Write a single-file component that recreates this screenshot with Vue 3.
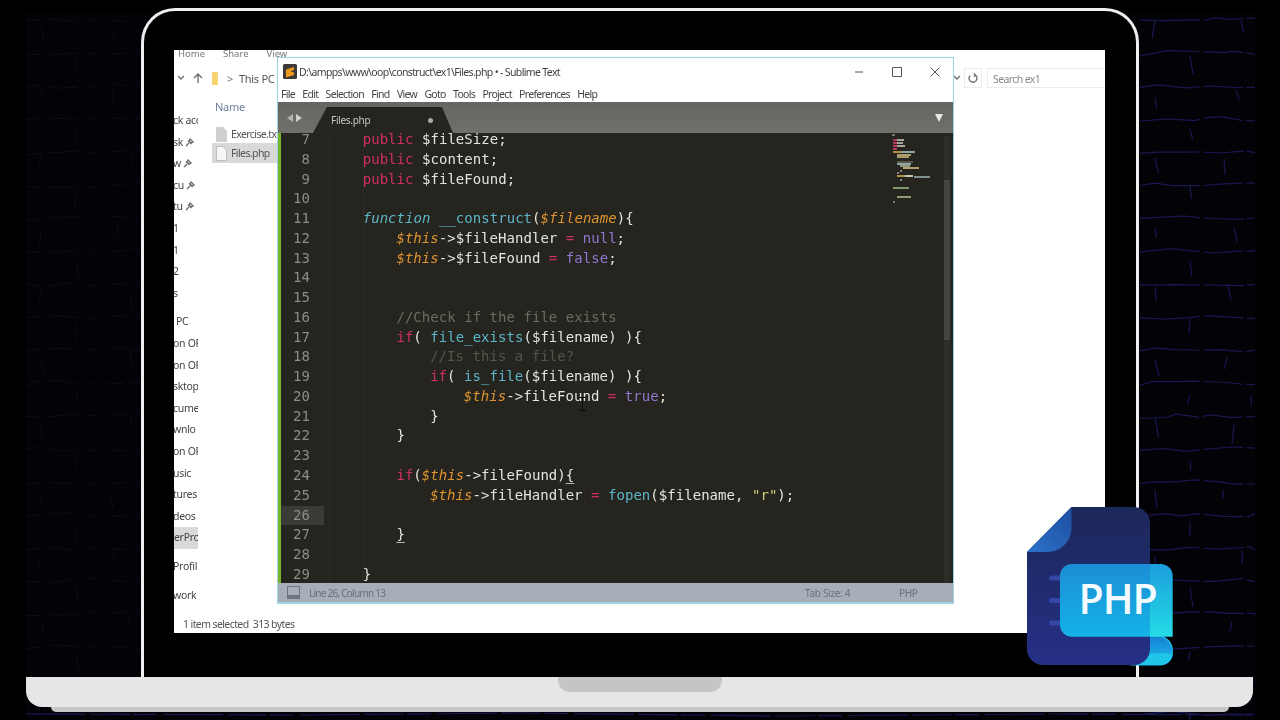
<script setup>
// tokens: k keyword, t plain, f function, v variable, o operator, c constant, m comment, s string, u underlined
const T = (t) => ["t", t];
const thisVar = ["v", "$this"];
const lines = [
  { n: 7, i: 1, p: [["k", "public"], T(" $fileSize;")] },
  { n: 8, i: 1, p: [["k", "public"], T(" $content;")] },
  { n: 9, i: 1, p: [["k", "public"], T(" $fileFound;")] },
  { n: 10, i: 0, p: [] },
  { n: 11, i: 1, p: [["f it", "function"], T(" "), ["f", "__construct"], T("("), ["v", "$filename"], T("){")] },
  { n: 12, i: 2, p: [thisVar, T("->$fileHandler "), ["o", "="], T(" "), ["c", "null"], T(";")] },
  { n: 13, i: 2, p: [thisVar, T("->$fileFound "), ["o", "="], T(" "), ["c", "false"], T(";")] },
  { n: 14, i: 0, p: [] },
  { n: 15, i: 0, p: [] },
  { n: 16, i: 2, p: [["m", "//Check if the file exists"]] },
  { n: 17, i: 2, p: [["k", "if"], T("( "), ["f", "file_exists"], T("($filename) ){")] },
  { n: 18, i: 3, p: [["m dim", "//Is this a file?"]] },
  { n: 19, i: 3, p: [["k", "if"], T("( "), ["f", "is_file"], T("($filename) ){")] },
  { n: 20, i: 4, p: [thisVar, T("->fileFound "), ["o", "="], T(" "), ["c", "true"], T(";")] },
  { n: 21, i: 3, p: [T("}")] },
  { n: 22, i: 2, p: [T("}")] },
  { n: 23, i: 0, p: [] },
  { n: 24, i: 2, p: [["k", "if"], T("("), thisVar, T("->fileFound)"), ["t u", "{"]] },
  { n: 25, i: 3, p: [thisVar, T("->fileHandler "), ["o", "="], T(" "), ["f", "fopen"], T("($filename, "), ["s", "\"r\""], T(");")] },
  { n: 26, i: 0, p: [], active: true },
  { n: 27, i: 2, p: [["t u", "}"]] },
  { n: 28, i: 0, p: [] },
  { n: 29, i: 1, p: [T("}")] },
];

const menu = ["File", "Edit", "Selection", "Find", "View", "Goto", "Tools", "Project", "Preferences", "Help"];

const navTop = [
  { t: "ck acc" }, { t: "sk", pin: true }, { t: "w", pin: true }, { t: "cu", pin: true }, { t: "tu", pin: true },
  { t: "1" }, { t: "1" }, { t: "2" }, { t: "s" },
];
const navPc = ["PC", "on OF", "on OF", "sktop", "cume", "wnlo", "on OF", "usic", "tures", "deos"];

// minimap: x, y, w, colour
const mini = [
  [892, 134, 3, "#7d7d70"], [893, 139, 4, "#b8375f"], [897, 139, 7, "#a5a59b"], [893, 142, 4, "#b8375f"], [897, 142, 6, "#a5a59b"],
  [893, 145, 4, "#b8375f"], [897, 145, 8, "#a5a59b"], [893, 148, 4, "#b8375f"], [893, 151, 8, "#b0953e"], [901, 151, 14, "#8fa6a6"], [897, 154, 14, "#a89a6a"],
  [897, 156, 12, "#a89a6a"], [897, 161, 16, "#55554c"], [897, 163, 14, "#8fa6a0"], [900, 165, 10, "#8f9a80"], [903, 167, 16, "#b0a070"],
  [900, 170, 2, "#888"], [897, 172, 2, "#888"], [897, 175, 8, "#b39245"], [905, 175, 8, "#c4c4b4"], [914, 176, 16, "#7f8f8f"],
  [900, 179, 2, "#888"], [893, 187, 16, "#7f9a70"], [897, 196, 14, "#8d9a78"], [893, 201, 2, "#777"],
];

// small seeded generator so the brick joints stay the same on every load
let seed = 7;
const rnd = () => {
  seed = (seed * 16807) % 2147483647;
  return seed / 2147483647;
};
const bricks = (x0, x1) => {
  let d = "";
  for (let r = 0, y = 20; y < 720; y += 33, r++) {
    let x = x0;
    d += `M${x} ${y + rnd() * 3}`;
    while (x < x1) {
      x += 10 + rnd() * 22;
      d += `L${Math.min(x, x1).toFixed(0)} ${(y + rnd() * 5 - 2.5).toFixed(1)}`;
    }
    for (let j = x0 + (r % 2) * 35 + 15; j < x1; j += 60 + rnd() * 30) {
      const from = y + rnd() * 12;
      d += `M${j.toFixed(0)} ${from.toFixed(1)}l${(rnd() * 7 - 3).toFixed(1)} ${(8 + rnd() * 12).toFixed(1)}`;
    }
  }
  return d;
};
const wallLeft = bricks(26, 140);
const wallRight = bricks(1140, 1255);
const wallBottom = "M26 714L300 715L520 713L780 716L1050 714L1255 715";
</script>

<template>
  <div class="stage">
    <svg class="wall" width="1280" height="720" viewBox="0 0 1280 720">
      <rect x="26" y="12" width="1229" height="708" fill="#020207" />
      <path :d="wallLeft" class="joints-left" />
      <path :d="wallRight" class="joints-right" />
      <path :d="wallBottom" class="joints-right" />
    </svg>

    <div class="laptop">
      <div class="screen">
        <div class="ribbon">
          <span>Home</span><span>Share</span><span>View</span>
        </div>
        <div class="addressbar">
          <svg class="chev" width="8" height="6" viewBox="0 0 8 6"><path d="M1 1l3 3 3-3" /></svg>
          <svg class="up" width="12" height="12" viewBox="0 0 12 12"><path d="M6 11V2M2 6l4-4 4 4" /></svg>
          <div class="crumb">
            <i class="folder"></i>
            <span class="sep">&gt;</span>
            <span>This PC</span>
          </div>
          <div class="spacer"></div>
          <svg class="chev dark" width="8" height="6" viewBox="0 0 8 6"><path d="M1 1l3 3 3-3" /></svg>
          <div class="refresh">
            <svg width="12" height="12" viewBox="0 0 12 12"><path d="M7 1.5l1.5 1.6L6.800 4.500M8.300 3A4 4 0 1 1 3 3.600" /></svg>
          </div>
          <div class="search">Search ex1</div>
        </div>

        <div class="explorer">
          <div class="nav">
            <div v-for="(r, i) in navTop" :key="'a' + i" class="nav-row">
              {{ r.t }}
              <svg v-if="r.pin" class="pin" width="9" height="9" viewBox="0 0 9 9"><path d="M1 8l3-3M3 2.500L6.500 6M5 1l3 3-2 1-2-2z" /></svg>
            </div>
            <div class="nav-pc">
              <div v-for="(r, i) in navPc" :key="'b' + i" class="nav-row" :class="{ indent: i === 0 }">{{ r }}</div>
            </div>
            <div class="nav-row picked">erPro</div>
            <div class="nav-row tall">Profil</div>
            <div class="nav-row tall">work</div>
          </div>
          <div class="files">
            <div class="col-name">Name</div>
            <div class="file">
              <svg width="11" height="15" viewBox="0 0 11 15"><path d="M0 0h7l4 4v11H0z" fill="#cfcfcf" /></svg>
              <span>Exercise.txt</span>
            </div>
            <div class="file selected">
              <svg width="11" height="15" viewBox="0 0 11 15"><path d="M.5.500h6.500l3.500 3.500v10.500H.5z" fill="#f6f6f6" stroke="#bdbdbd" /></svg>
              <span>Files.php</span>
            </div>
          </div>
        </div>
        <div class="ex-status">1 item selected&nbsp;&nbsp;313 bytes</div>

        <div class="sublime">
          <div class="titlebar">
            <svg class="st-logo" width="14" height="15" viewBox="0 0 14 15">
              <rect width="14" height="15" rx="1.500" fill="#3b3a38" />
              <path d="M3 5.500L11 3v3L3 8.500zM3 8.500l8 2.500-8 2.500zM3 8.500v-3l8 3v2.500z" fill="#ef9a1f" />
            </svg>
            <span class="st-title">D:\ampps\www\oop\construct\ex1\Files.php • - Sublime Text</span>
            <div class="spacer"></div>
            <div class="win-btns">
              <svg width="10" height="10" viewBox="0 0 10 10"><path d="M1 5h8" /></svg>
              <svg width="10" height="10" viewBox="0 0 10 10"><path d="M.5.500h9v9h-9z" /></svg>
              <svg width="10" height="10" viewBox="0 0 10 10"><path d="M.5.500l9 9M9.500.500l-9 9" /></svg>
            </div>
          </div>
          <div class="menubar">
            <span v-for="m in menu" :key="m">{{ m }}</span>
          </div>
          <div class="tabbar">
            <div class="arrows"><i class="arr left"></i><i class="arr right"></i></div>
            <div class="tab">
              <span>Files.php</span>
              <i class="dot"></i>
            </div>
            <div class="spacer"></div>
            <i class="tab-menu"></i>
          </div>
          <div class="editor">
            <div class="code">
              <div v-for="l in lines" :key="l.n" class="line">
                <div class="num" :class="{ active: l.active }">{{ l.n }}</div>
                <div class="src" :style="{ paddingLeft: l.i * 4 + 'ch' }">
                  <span v-for="(p, i) in l.p" :key="i" :class="p[0]">{{ p[1] }}</span>
                </div>
              </div>
            </div>
            <svg class="minimap" width="40" height="72" viewBox="890 133 40 72">
              <rect v-for="(b, i) in mini" :key="i" :x="b[0]" :y="b[1]" :width="b[2]" height="2" :fill="b[3]" />
            </svg>
            <div class="scroll"><div class="thumb"></div></div>
            <svg class="ibeam" width="9" height="14" viewBox="0 0 9 14"><path d="M1 .5h7M4.500.5v13M1 13.500h7" /></svg>
          </div>
          <div class="statusbar">
            <svg width="13" height="13" viewBox="0 0 13 13">
              <rect x=".5" y=".5" width="12" height="12" fill="none" stroke="#6d7480" />
              <rect x="1" y="9" width="11" height="3.500" fill="#6d7480" />
            </svg>
            <span class="pos">Line 26, Column 13</span>
            <div class="spacer"></div>
            <span class="tabsize">Tab Size: 4</span>
            <span class="syntax">PHP</span>
          </div>
        </div>
      </div>
    </div>

    <div class="base"><div class="notch"></div></div>
    <div class="base-under"></div>

    <svg class="php-badge" width="148" height="160" viewBox="1026 506 148 160">
      <defs>
        <linearGradient id="docFill" x1="0" y1="0" x2="0" y2="1">
          <stop offset="0" stop-color="#1c2859" />
          <stop offset="1" stop-color="#252f86" />
        </linearGradient>
        <linearGradient id="foldFill" x1="0" y1="1" x2="1" y2="0">
          <stop offset="0" stop-color="#2c72c9" />
          <stop offset="1" stop-color="#1d4fa0" />
        </linearGradient>
        <linearGradient id="labelFill" x1="0" y1="0" x2="0" y2="1">
          <stop offset="0" stop-color="#1b8ed6" />
          <stop offset="1" stop-color="#15b2e6" />
        </linearGradient>
        <linearGradient id="labelEnd" x1="0" y1="0" x2="0" y2="1">
          <stop offset="0" stop-color="#1c9fdc" />
          <stop offset="1" stop-color="#24dbe6" />
        </linearGradient>
        <linearGradient id="curl" x1="0" y1="0" x2="0" y2="1">
          <stop offset="0" stop-color="#177fd4" />
          <stop offset="1" stop-color="#1aa9e4" />
        </linearGradient>
      </defs>
      <path d="M1150 636h10c7 0 13 7 13 15v2c0 7-6 12.500-13 12.500h-30z" fill="#1fc6ea" />
      <path d="M1150 636.500h8c8 0 15 8 15 18-6-1.500-14-1.500-23-.500z" fill="url(#curl)" />
      <path d="M1071.500 507H1134a16 16 0 0 1 16 16v126a16 16 0 0 1-16 16h-91a16 16 0 0 1-16-16V552z" fill="url(#docFill)" />
      <path d="M1071.500 507v21a24 24 0 0 1-24 24H1027z" fill="url(#foldFill)" />
      <rect x="1049" y="575.500" width="12" height="5" rx="2.500" fill="#3446a6" />
      <rect x="1049" y="598" width="12" height="5" rx="2.500" fill="#3446a6" />
      <rect x="1049" y="620.500" width="12" height="5" rx="2.500" fill="#3446a6" />
      <path d="M1072 564h78v72.700h-78a12 12 0 0 1-12-12V576a12 12 0 0 1 12-12z" fill="url(#labelFill)" />
      <path d="M1150 564h10.700a12 12 0 0 1 12 12v60.700h-22.700z" fill="url(#labelEnd)" />
      <text x="1078.500" y="614" class="php-text">PHP</text>
    </svg>
  </div>
</template>

<style>
html,
body {
  background: #000;
}
</style>

<style scoped>
.stage {
  position: relative;
  width: 1280px;
  height: 720px;
  overflow: hidden;
  background: #000;
  padding-top: 8px;
  box-sizing: border-box;
  display: flex;
  flex-direction: column;
  font-family: "Noto Sans", sans-serif;
}

.wall {
  position: absolute;
  left: 0;
  top: 0;
}

.joints-left {
  fill: none;
  stroke: #0c0c1e;
  stroke-width: 1;
  stroke-dasharray: 16 7 28 11 7 15;
}

.joints-right {
  fill: none;
  stroke: #181852;
  stroke-width: 1.200;
  stroke-dasharray: 60 4 40 3 24 6;
}

.laptop {
  position: relative;
  width: 998px;
  height: 669px;
  margin-left: 141px;
  box-sizing: border-box;
  background: #000;
  border: 3px solid #efefef;
  border-bottom: none;
  border-radius: 34px 34px 0 0;
  padding: 39px 31px 0 30px;
}

.base {
  position: relative;
  width: 1227px;
  height: 30px;
  margin-left: 26px;
  background: #e6e6e6;
  border-radius: 0 0 16px 16px;
  display: flex;
  justify-content: center;
}

.notch {
  width: 164px;
  height: 15px;
  margin-left: 1px;
  background: #c5c5c5;
  border-radius: 0 0 12px 12px;
}

.base-under {
  position: relative;
  width: 1178px;
  height: 5px;
  margin-left: 51px;
  background: #c6c6c6;
  border-radius: 0 0 6px 6px;
}

.screen {
  position: relative;
  width: 931px;
  height: 583px;
  background: #fff;
  display: flex;
  flex-direction: column;
  overflow: hidden;
  filter: blur(0.35px);
}

.spacer {
  flex: 1;
}

.ribbon {
  height: 8px;
  flex: none;
  display: flex;
  gap: 18px;
  padding-left: 4px;
  font-size: 9.500px;
  line-height: 7px;
  color: #777;
  overflow: hidden;
}

.addressbar {
  height: 24px;
  flex: none;
  margin-top: 8px;
  display: flex;
  align-items: center;
  color: #555;
  font-size: 11px;
}

.chev {
  margin-left: 3px;
}

.chev path,
.up path,
.refresh path,
.pin path {
  fill: none;
  stroke: #6b6b6b;
  stroke-width: 1.300;
}

.chev.dark {
  margin: 0 3px 0 0;
}

.up {
  margin-left: 7px;
}

.crumb {
  display: flex;
  align-items: center;
  margin-left: 8px;
  height: 20px;
  letter-spacing: -0.3px;
}

.folder {
  width: 6px;
  height: 13px;
  margin-right: 9px;
  background: #f6d36f;
  border-radius: 1px;
}

.sep {
  margin-right: 6px;
  color: #777;
}

.refresh {
  width: 16px;
  height: 18px;
  border: 1px solid #ececec;
  display: flex;
  align-items: center;
  justify-content: center;
  margin-right: 5px;
}

.search {
  width: 112px;
  height: 18px;
  line-height: 20px;
  padding-left: 5px;
  border: 1px solid #ececec;
  border-right: none;
  color: #8a8a8a;
  font-size: 10.500px;
  letter-spacing: -0.6px;
}

.explorer {
  flex: 1;
  display: flex;
  min-height: 0;
  margin-top: 3px;
}

.nav {
  width: 24px;
  overflow: hidden;
  padding-top: 17px;
  flex: none;
  color: #444;
  font-size: 10.500px;
  letter-spacing: -0.3px;
}

.nav-row {
  height: 21.600px;
  line-height: 21.600px;
  white-space: nowrap;
  margin-left: -1px;
}

.nav-row.indent {
  padding-left: 3px;
}

.nav-pc {
  margin-top: 7px;
}

.nav-row.picked {
  background: #d9d9d9;
  margin-left: 0;
}

.nav-row.tall {
  margin-top: 7.400px;
}

.pin {
  vertical-align: -1px;
}

.files {
  margin-left: 14px;
  padding-top: 4px;
  font-size: 10.500px;
  letter-spacing: -0.6px;
  color: #555;
}

.col-name {
  height: 20px;
  line-height: 20px;
  margin-left: 3px;
  margin-bottom: 7px;
  color: #6d7f9b;
  font-size: 11px;
  letter-spacing: -0.3px;
}

.file {
  width: 65px;
  height: 20px;
  margin-top: 1px;
  display: flex;
  align-items: center;
  gap: 4px;
  padding-left: 4px;
  box-sizing: border-box;
  white-space: nowrap;
  overflow: hidden;
}

.file svg {
  flex: none;
}

.file + .file {
  margin-top: -1px;
}

.file.selected {
  background: #d9d9d9;
}

.ex-status {
  height: 20px;
  flex: none;
  line-height: 22px;
  padding-left: 9px;
  font-size: 10.500px;
  letter-spacing: -0.6px;
  color: #555;
}

/* the editor window floats over the explorer like on a real desktop */
.sublime {
  position: absolute;
  left: 103px;
  top: 7px;
  width: 677px;
  height: 547px;
  box-sizing: border-box;
  border: 1px solid #9ed3e2;
  border-bottom-width: 2px;
  display: flex;
  flex-direction: column;
  background: #fff;
}

.titlebar {
  height: 27px;
  flex: none;
  display: flex;
  align-items: center;
  padding-left: 5px;
}

.st-logo {
  flex: none;
}

.st-title {
  margin-left: 2px;
  font-size: 10.500px;
  letter-spacing: -0.64px;
  color: #3f3f3f;
  white-space: nowrap;
}

.win-btns {
  display: flex;
  gap: 28px;
  margin-right: 13px;
}

.win-btns path {
  fill: none;
  stroke: #555;
  stroke-width: 1;
}

.menubar {
  height: 17px;
  flex: none;
  display: flex;
  align-items: center;
  gap: 7.300px;
  padding-left: 3px;
  font-size: 10.500px;
  letter-spacing: -0.7px;
  color: #444;
}

.tabbar {
  height: 31px;
  flex: none;
  display: flex;
  align-items: flex-end;
  background: linear-gradient(#666661, #70706b);
}

.arrows {
  width: 35px;
  height: 31px;
  flex: none;
  display: flex;
  align-items: center;
  gap: 3px;
  padding-left: 9px;
  box-sizing: border-box;
}

.arr {
  width: 0;
  height: 0;
  border-top: 4.500px solid transparent;
  border-bottom: 4.500px solid transparent;
}

.arr.left {
  border-right: 6px solid #b4b4b0;
}

.arr.right {
  border-left: 6px solid #cfcfcb;
}

.tab {
  width: 140px;
  height: 26px;
  display: flex;
  align-items: center;
  justify-content: space-between;
  padding: 0 20px 0 18px;
  box-sizing: border-box;
  background: #25241f;
  clip-path: polygon(0 100%, 14px 0, 129px 0, 140px 100%);
  color: #c6c6c6;
  font-size: 10px;
  letter-spacing: -0.3px;
}

.dot {
  width: 5px;
  height: 5px;
  border-radius: 50%;
  background: #a9a9a5;
}

.tab-menu {
  width: 0;
  height: 0;
  margin: 0 10px 11px 0;
  border-left: 4px solid transparent;
  border-right: 4px solid transparent;
  border-top: 8px solid #e8e8e8;
}

.editor {
  position: relative;
  flex: 1;
  min-height: 0;
  overflow: hidden;
  background: #25241f;
  border-left: 3px solid #79b52c;
}

.code {
  margin-top: -3px;
  font-family: "DejaVu Sans Mono", monospace;
  font-size: 14px;
  letter-spacing: 0.04px;
  color: #e4e4de;
}

.line {
  display: flex;
  height: 19.770px;
  line-height: 19.770px;
  white-space: pre;
}

.num {
  width: 43px;
  flex: none;
  box-sizing: border-box;
  padding-right: 14px;
  text-align: right;
  color: #8d8d85;
  margin-right: 5px;
}

.num.active {
  background: #3b3b36;
}

.src {
  flex: 1;
  background:
    linear-gradient(#2c2b26, #2c2b26) 0 0 / 1px 100% no-repeat,
    linear-gradient(#2c2b26, #2c2b26) 34px 0 / 1px 100% no-repeat;
}

.k,
.o {
  color: #cf2f63;
}

.f {
  color: #5cb6c8;
}

.it {
  font-style: italic;
}

.v {
  color: #df942f;
  font-style: italic;
}

.c {
  color: #9079d2;
}

.m {
  color: #6d6c60;
}

.m.dim {
  color: #55544b;
}

.s {
  color: #d6d083;
}

.u {
  text-decoration: underline;
  text-underline-offset: 3px;
  text-decoration-color: #b8b8ae;
}

.minimap {
  position: absolute;
  left: 609px;
  top: 0;
}

.scroll {
  position: absolute;
  right: 3px;
  top: 3px;
  bottom: 0;
  width: 6px;
  background: #2d2c28;
}

.thumb {
  margin-top: 44px;
  height: 160px;
  background: #45453f;
}

.ibeam {
  position: absolute;
  left: 297px;
  top: 264px;
}

.ibeam path {
  fill: none;
  stroke: #0c0c0c;
  stroke-width: 1;
}

.statusbar {
  height: 19px;
  flex: none;
  display: flex;
  align-items: center;
  padding-left: 9px;
  background: #a7aeb8;
  color: #69717d;
  font-size: 10px;
  letter-spacing: -0.75px;
}

.pos {
  margin-left: 9px;
}

.tabsize {
  width: 94px;
  letter-spacing: -0.3px;
}

.syntax {
  width: 54px;
  letter-spacing: -0.3px;
}

.php-badge {
  position: absolute;
  left: 1026px;
  top: 506px;
}

.php-text {
  font-family: "Open Sans", sans-serif;
  font-size: 41px;
  font-weight: 600;
  letter-spacing: -1px;
  fill: #f4fbfe;
}
</style>
